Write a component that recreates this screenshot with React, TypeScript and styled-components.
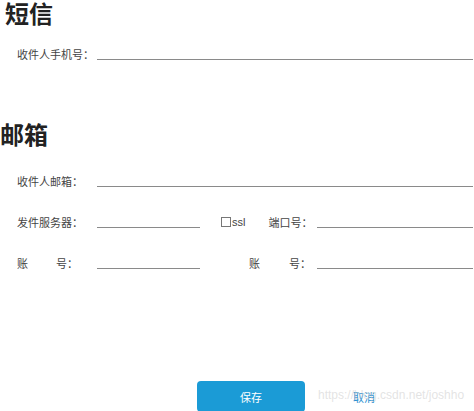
import styled, { createGlobalStyle } from 'styled-components'

const GlobalStyle = createGlobalStyle`
  html, body {
    margin: 0;
    padding: 0;
    background: #fff;
  }
  body {
    font-family: "Noto Sans CJK SC", "Noto Sans", sans-serif;
    color: #444;
  }
`

export default function App() {
  return (
    <>
      <GlobalStyle />
      <Page>
        <Title $indent={5} $top={1}>短信</Title>
        <Row $top={18}>
          <Label>收件人手机号：</Label>
          <Field />
        </Row>

        <Title $indent={0} $top={57}>邮箱</Title>
        <Row $top={24}>
          <Label>收件人邮箱：</Label>
          <Field />
        </Row>
        <Row $top={19}>
          <Label>发件服务器：</Label>
          <Field $width={103} />
          <Middle $pad={21}>
            <Check />
            <Small>ssl</Small>
            <Text $gap={23}>端口号：</Text>
          </Middle>
          <Field />
        </Row>
        <Row $top={19}>
          <Label>
            账<Spaced $gap={28}>号：</Spaced>
          </Label>
          <Field $width={103} />
          <Middle $pad={49}>
            <Text>账</Text>
            <Text $gap={29}>号：</Text>
          </Middle>
          <Field />
        </Row>

        <Actions>
          <SaveButton>保存</SaveButton>
          <CancelLink>取消</CancelLink>
          <Watermark>https://blog.csdn.net/joshho</Watermark>
        </Actions>
      </Page>
    </>
  )
}

const Page = styled.div`
  width: 474px;
  height: 411px;
  overflow: hidden;
  display: flex;
  flex-direction: column;
`

const Title = styled.h2<{ $indent: number; $top?: number }>`
  margin: ${p => p.$top || 0}px 0 0 ${p => p.$indent}px;
  font-size: 24px;
  line-height: 24px;
  font-weight: bold;
  color: #222;
`

const Row = styled.div<{ $top: number }>`
  display: flex;
  align-items: center;
  height: 22px;
  margin-top: ${p => p.$top}px;
  padding: 0 1px 0 17px;
`

const Label = styled.div`
  width: 80px;
  flex-shrink: 0;
  font-size: 11px;
  line-height: 22px;
  color: #444;
  white-space: nowrap;
`

const Spaced = styled.span<{ $gap: number }>`
  margin-left: ${p => p.$gap}px;
`

const Field = styled.div<{ $width?: number }>`
  flex: ${p => (p.$width ? `0 0 ${p.$width}px` : '1 1 auto')};
  height: 1px;
  margin-top: 10px;
  background: #8a8a8a;
`

const Middle = styled.div<{ $pad: number }>`
  width: 117px;
  flex-shrink: 0;
  box-sizing: border-box;
  padding-left: ${p => p.$pad}px;
  display: flex;
  align-items: center;
`

const Check = styled.span`
  width: 8px;
  height: 8px;
  border: 1px solid #777;
  flex-shrink: 0;
`

const Small = styled.span`
  font-family: "Liberation Sans", Arial, sans-serif;
  font-size: 11px;
  margin-left: 1px;
  color: #444;
`

const Text = styled.span<{ $gap?: number }>`
  font-size: 11px;
  line-height: 22px;
  margin-left: ${p => p.$gap || 0}px;
  color: #444;
  white-space: nowrap;
`

const Actions = styled.div`
  position: relative;
  display: flex;
  align-items: center;
  margin-top: 107px;
  padding-left: 197px;
`

const SaveButton = styled.button`
  width: 108px;
  height: 31px;
  border: none;
  border-radius: 4px;
  background: #1b9bd6;
  color: #fff;
  font-family: inherit;
  font-size: 11px;
  padding: 0;
`

const CancelLink = styled.a`
  margin-left: 48px;
  font-size: 11px;
  color: #2b8fd0;
  cursor: pointer;
`

const Watermark = styled.span`
  position: absolute;
  left: 318px;
  top: 7px;
  font-family: "Liberation Sans", Arial, sans-serif;
  font-size: 12px;
  color: rgba(200, 200, 200, 0.5);
  pointer-events: none;
  white-space: nowrap;
`
